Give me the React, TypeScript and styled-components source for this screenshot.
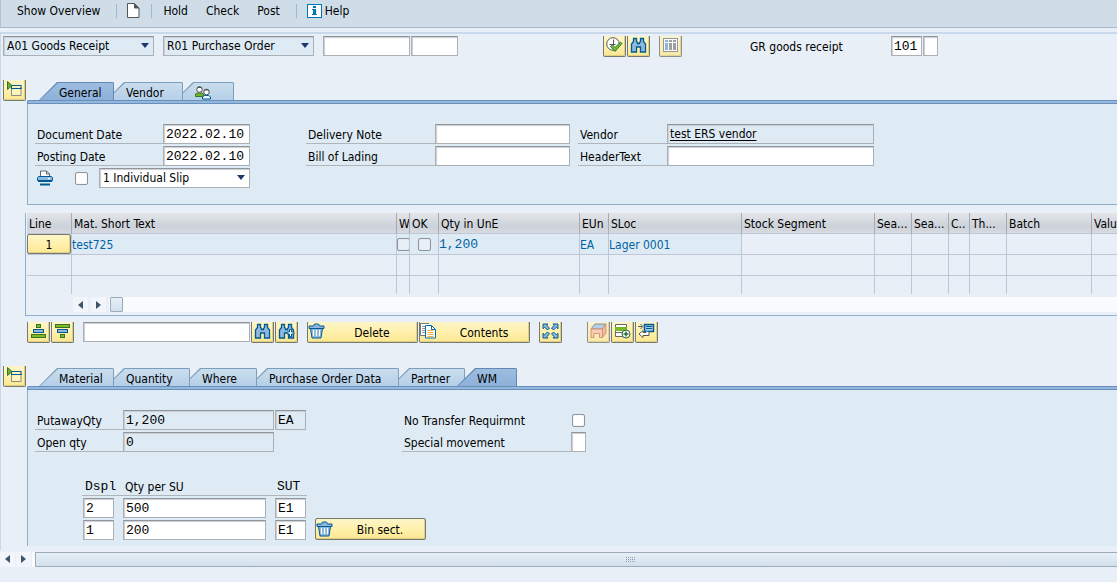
import React from "react";
import styled, { createGlobalStyle, css } from "styled-components";

const sans = `"DejaVu Sans Condensed", "DejaVu Sans", "Noto Sans", sans-serif`;
const mono = `"Liberation Mono", monospace`;

const GlobalStyle = createGlobalStyle`
  *, *::before, *::after { box-sizing: border-box; }
  body { margin: 0; background: #e8eff6; overflow-x: hidden; }
  body, button, input, select { font-family: ${sans}; font-size: 12px; color: #000; }
  svg { display: block; flex: none; }
`;

/* ---------- page frame ---------- */

const Toolbar = styled.header`
  display: flex;
  align-items: center;
  height: 28px;
  padding: 0 0 6px 7px;
  background: #cfdde8;
  border-bottom: 1px solid #a7b8c9;
  border-left: 1px solid #b5c4d3;
`;

const ToolButton = styled.button<{ $icon?: boolean }>`
  display: flex;
  align-items: center;
  gap: 3px;
  height: 20px;
  padding: ${(p) => (p.$icon ? "0 4px 0 8px" : "0 9px")};
  border: 0;
  background: none;
  white-space: nowrap;
`;

const ToolDivider = styled.span`
  width: 1px;
  height: 14px;
  margin: 0 2px 0 7px;
  background: #9fb8d3;
`;

const Work = styled.main`
  margin-top: 4px;
  padding: 2px 0 4px 2px;
  border-top: 2px solid #c9d8ea;
  border-left: 1px solid #c9d8ea;
`;

const BarRow = styled.div<{ $indent?: boolean }>`
  display: flex;
  align-items: flex-start;
  gap: 9px;
  height: 21px;
  padding-left: ${(p) => (p.$indent ? "24px" : "0")};
`;

const Group = styled.div<{ $before?: number }>`
  display: flex;
  align-items: flex-start;
  gap: 1px;
  margin-left: ${(p) => p.$before ?? 0}px;
`;

const BarLabel = styled.label`
  width: 132px;
  padding-top: 1px;
  line-height: 21px;
`;

/* ---------- controls ---------- */

const sunken = css`
  border: 1px solid #aab0b6;
  border-top: 1px solid #8f959b;
  box-shadow: inset 1px 1px 1px #c9ced3;
`;

const Field = styled.input<{ $w: number; $sans?: boolean }>`
  ${sunken}
  display: block;
  width: ${(p) => p.$w}px;
  height: 20px;
  padding: 0 2px;
  border-radius: 0;
  outline: none;
  background: ${(p) => (p.readOnly ? "#deebf5" : "#fff")};
  font-family: ${(p) => (p.$sans ? sans : mono)};
  font-size: ${(p) => (p.$sans ? "12px" : "13px")};
  text-decoration: ${(p) => (p.$sans ? "underline" : "none")};
  text-underline-offset: 2px;
`;

const SelectBox = styled.span<{ $flat?: boolean }>`
  position: relative;
  display: block;
  width: 151px;
  height: 20px;

  select {
    ${sunken}
    appearance: none;
    display: block;
    width: 100%;
    height: 100%;
    padding: 0 18px 0 3px;
    border-radius: 0;
    outline: none;
    background: ${(p) => (p.$flat ? "#deebf5" : "#fff")};
  }

  &::after {
    content: "";
    position: absolute;
    top: 7px;
    right: 5px;
    border: 4px solid transparent;
    border-top: 5px solid #1d3a66;
    border-bottom: 0;
    pointer-events: none;
  }
`;

const Check = styled.input.attrs({ type: "checkbox" })<{ $tint?: boolean }>`
  appearance: none;
  flex: none;
  width: 13px;
  height: 13px;
  margin: 0;
  border: 1px solid #8e959c;
  border-radius: 2px;
  background: ${(p) => (p.$tint ? "#e8eff6" : "#fff")};
  box-shadow: inset 0 0 1px #b9bfc6;
`;

const yellow = css`
  border: 1px solid #77786f;
  border-radius: 2px;
  background: linear-gradient(#fdf5c9, #fff0a9 55%, #fbe792);
  box-shadow: inset -1px -1px 0 #e0cf83;
`;

const IconButton = styled.button<{ $dim?: boolean }>`
  ${yellow}
  display: flex;
  align-items: center;
  justify-content: center;
  width: 23px;
  height: 21px;
  padding: 0 0 2px;
  border-top: 0;
  border-radius: 0 0 2px 2px;
  opacity: ${(p) => (p.$dim ? 0.8 : 1)};
`;

const TextButton = styled.button`
  ${yellow}
  display: flex;
  align-items: center;
  width: 111px;
  height: 22px;
  padding: 0;

  span {
    flex: 1;
    padding: 2px 0 0 2px;
  }
`;

const BarTextButton = styled(TextButton)`
  height: 21px;
  padding-bottom: 2px;
  border-top: 0;
  border-radius: 0 0 2px 2px;

  span { padding-top: 3px; }
`;

/* ---------- tabbed sections ---------- */

const Section = styled.section<{ $gap: number }>`
  display: flex;
  gap: 1px;
  margin-top: ${(p) => p.$gap}px;
`;

const SectionBody = styled.div`
  flex: 1;
  min-width: 0;
`;

const TabList = styled.div`
  display: flex;
  padding: 2px 0 0 12px;
  isolation: isolate;
`;

const Tab = styled.button<{ $w: number; $order: number; $active?: boolean }>`
  position: relative;
  z-index: ${(p) => (p.$active ? 20 : p.$order)};
  width: ${(p) => p.$w}px;
  height: 18px;
  margin-right: -8px;
  padding: 3px 0 0 20px;
  border: 0;
  background: ${(p) => (p.$active ? "#6288b3" : "#7d9dbd")};
  clip-path: polygon(0 100%, 18px 0, calc(100% - 1px) 0, 100% 1px, 100% 100%);
  text-align: left;
  white-space: nowrap;

  &::before {
    content: "";
    position: absolute;
    z-index: -1;
    inset: 1px 1px 0 1px;
    background: ${(p) =>
      p.$active ? "linear-gradient(#9dbde0, #8db1da)" : "linear-gradient(#c9dded, #b5cfe8)"};
    clip-path: polygon(0 100%, 18px 0, 100% 0, 100% 100%);
  }
`;

const TabStrip = styled.div`
  height: 4px;
  border: 1px solid #6890bb;
  border-right: 0;
  border-radius: 2px 0 0 0;
  background: #94b7dd;
`;

const Panel = styled.div<{ $open?: boolean }>`
  padding: 20px 0 ${(p) => (p.$open ? 6 : 16)}px 7px;
  border-left: 1px solid #8fafcf;
  border-bottom: ${(p) => (p.$open ? "0" : "1px solid #8fafcf")};
  background: #deebf5;
`;

const FormColumns = styled.div<{ $gaps: string }>`
  display: grid;
  grid-template-columns: ${(p) => p.$gaps};
  align-items: start;
`;

const FormColumn = styled.div`
  display: flex;
  flex-direction: column;
  gap: 2px;
`;

const FormRow = styled.div`
  display: flex;
  height: 20px;
`;

const FormLabel = styled.label<{ $w: number; $plain?: boolean }>`
  width: ${(p) => p.$w}px;
  padding: 1px 0 0 2px;
  border-bottom: 1px solid ${(p) => (p.$plain ? "transparent" : "#b0b5bb")};
  line-height: 21px;
  white-space: nowrap;
`;

const SlipRow = styled(FormRow)`
  align-items: center;
  padding-left: 2px;

  svg { margin-right: 22px; }
  input { margin-right: 11px; }
`;

const Spacer = styled.span`
  width: 1px;
`;

const CheckRow = styled(FormRow)`
  input { margin: 4px 0 0 1px; }
`;

const UnitTable = styled.table`
  border-collapse: separate;
  border-spacing: 0;

  th {
    height: 18px;
    padding: 0 0 0 3px;
    border-bottom: 1px solid #b0b5bb;
    font-weight: normal;
    text-align: left;
    line-height: 16px;
  }
  td { padding: 2px 0 0 1px; }
`;

const MonoText = styled.span`
  font-family: ${mono};
  font-size: 13px;
`;

const UnitArea = styled.div`
  display: flex;
  align-items: flex-end;
  gap: 8px;
  margin: 26px 0 0 47px;
`;

/* ---------- item table ---------- */

const ItemFrame = styled.div`
  margin: 8px 0 6px 22px;
  padding-left: 1px;
  border-left: 1px solid #8fafcf;
  border-bottom: 1px solid #8fb1d3;
`;

const ItemTable = styled.table`
  width: 100%;
  table-layout: fixed;
  border-collapse: separate;
  border-spacing: 0;

  th, td {
    height: 21px;
    padding: 0;
    border-right: 1px solid #bfc6d6;
    border-bottom: 1px solid #bfc6d6;
    overflow: hidden;
    white-space: nowrap;
    text-align: left;
    font-weight: normal;
  }
  th {
    padding: 2px 0 0 2px;
    border-right-color: #a3abb8;
    background: linear-gradient(#e4e6e9, #d3d8de 45%, #cdd2da 70%, #d8dbe0);
  }
  td { color: #0062a4; }
  tr:last-child td { height: 18px; border-bottom: 0; }
  th:last-child, td:last-child { border-right: 0; }
`;

const Cell = styled.td<{ $filled?: boolean }>`
  background: ${(p) => (p.$filled ? "#deebf5" : "transparent")};
  input { display: block; }
`;

const OkCell = styled(Cell)`
  input { margin: 0 0 0 8px; }
`;

const CellText = styled.div`
  padding-top: 2px;
`;

const LineButton = styled.button`
  ${yellow}
  display: block;
  width: 44px;
  height: 20px;
  padding: 1px 0 0;
`;

const QtyText = styled(MonoText)`
  color: #0062a4;
`;

/* ---------- scroll bars ---------- */

const ScrollBar = styled.div<{ $page?: boolean }>`
  display: flex;
  align-items: center;
  gap: 3px;
  height: ${(p) => (p.$page ? 18 : 21)}px;
  padding-left: ${(p) => (p.$page ? 0 : 46)}px;
`;

const ScrollArrow = styled.button`
  display: flex;
  align-items: center;
  justify-content: center;
  width: 15px;
  height: 15px;
  padding: 0;
  border: 0;
  background: #f2f6fa;
`;

const ScrollTrack = styled.div`
  flex: 1;
  height: 15px;
  padding-left: 1px;
  background: #fafbfc;
`;

const ScrollThumb = styled.div<{ $full?: boolean }>`
  display: flex;
  align-items: center;
  justify-content: center;
  width: ${(p) => (p.$full ? "auto" : "13px")};
  height: 15px;
  padding-left: ${(p) => (p.$full ? "10%" : "0")};
  border: 1px solid #9aabbb;
  border-right-width: ${(p) => (p.$full ? 0 : 1)}px;
  border-radius: ${(p) => (p.$full ? "1px 0 0 1px" : "1px")};
  background: linear-gradient(#e6eff6, #d3e0ec);
`;

const PageScroll = styled(ScrollBar)`
  gap: 1px;

  ${ScrollTrack} { padding-left: 3px; }
`;

/* ---------- icons ---------- */

const DocIcon = () => (
  <svg width="13" height="15" viewBox="0 0 13 15">
    <path d="M.5.5h7l4.500 4.500v9.500h-11.500z" fill="#fff" stroke="#555" />
    <path d="M7.500.5v4.500h4.500z" fill="#555" stroke="#555" />
  </svg>
);

const InfoIcon = () => (
  <svg width="15" height="14" viewBox="0 0 15 14" shapeRendering="crispEdges">
    <path d="M.5.5h14v13h-14z" fill="#fff" stroke="#0078b8" />
    <path d="M6 2h3v2h-3zM5 5h4v5h1v1h-5v-1h1v-4h-1z" fill="#0078b8" />
  </svg>
);

const OverviewIcon = () => (
  <svg width="15" height="16" viewBox="0 0 15 16">
    <path d="M4.500 6v8.500h9.500v-8.500" fill="#fdf3bd" stroke="#888c88" />
    <path d="M5 4.500h9.500M4 7.500h10.500" stroke="#005b94" />
    <path d="M4.500 5v3M14 5v3" stroke="#005b94" />
    <path d="M.5.500l4.500 4-4.500 4z" fill="#6db02a" stroke="#34752a" />
  </svg>
);

const ClockCheckIcon = () => (
  <svg width="17" height="16" viewBox="0 0 17 16">
    <circle cx="7" cy="7" r="6.300" fill="#fff" stroke="#555" />
    <path d="M7.500 2.500v6M3.500 7.500h6" stroke="#555" fill="none" />
    <path d="M4.500 9.500l2-1.500 2.500 2.500 5.500-5.500 1.500 1.500-7 8z" fill="#7bbb2e" stroke="#2d7c34" />
  </svg>
);

const Binoculars = ({ plus }: { plus?: boolean }) => (
  <svg width="17" height="16" viewBox="0 0 17 16">
    <path
      d="M3.500 1.500h3v3l1 1v1h2v-1l1-1v-3h3v3l2 2.500v8h-5v-5h-4v5h-5v-8l2-2.500z"
      fill="#90b9dd"
      stroke="#005b94"
      strokeWidth="1.300"
    />
    {plus && (
      <path d="M11.500 6.500h2v2.500h2.500v2h-2.500v2.500h-2v-2.500h-2.500v-2h2.500z" fill="#fff" stroke="#005b94" />
    )}
  </svg>
);

const ColumnsIcon = () => (
  <svg width="17" height="16" viewBox="0 0 17 16" shapeRendering="crispEdges">
    <path d="M1.500 1.500h14v13h-14z" fill="#fff" stroke="#808080" />
    <path d="M3 3h3v2h-3zM3 6h3v7h-3z" fill="#78a8c8" />
    <path d="M7 3h3v2h-3zM7 6h3v7h-3zM11 3h3v2h-3zM11 6h3v7h-3z" fill="#8b8b8b" />
  </svg>
);

const PeopleIcon = () => (
  <svg width="17" height="14" viewBox="0 0 17 14">
    <path d="M.5 10.500v-2.500l2-1h4l2 1v2.500z" fill="#73b32c" stroke="#34752a" />
    <circle cx="4.500" cy="3.500" r="2.800" fill="#fff" stroke="#555" />
    <path d="M2 3.500q0-3 2.500-3t2.500 3l-1-1.500h-3z" fill="#555" />
    <path d="M7.500 13v-2l2-1.500h4l2 1.500v2z" fill="#eaf5ff" stroke="#005b94" />
    <circle cx="11.500" cy="6" r="2.800" fill="#fff" stroke="#555" />
    <path d="M9 6q0-3 2.500-3t2.500 3l-1-1.500h-3z" fill="#555" />
  </svg>
);

const PrinterIcon = () => (
  <svg width="16" height="16" viewBox="0 0 16 16">
    <path d="M3.500 7v-6h6l3 3v3" fill="#fff" stroke="#666" />
    <path d="M9.500 1v3h3" fill="none" stroke="#666" />
    <path d="M.5 7.500l1-1h13l1 1v3h-15z" fill="#8fb9dc" stroke="#005b94" />
    <path d="M11 8.500h2" stroke="#fff" />
    <path d="M1 11h14v1h-14zM3 13.500h10v2h-10z" fill="#005b94" />
  </svg>
);

const PyramidIcon = ({ down }: { down?: boolean }) => (
  <svg width="17" height="16" viewBox="0 0 17 16" shapeRendering="crispEdges">
    {down ? (
      <>
        <path d="M1.500 1.500h14v3h-14z" fill="#84b920" stroke="#34752a" />
        <path d="M3.500 6.500h10v3h-10z" fill="#8fb9dc" stroke="#005b94" />
        <path d="M6.500 11.500h4v3h-4z" fill="#84b920" stroke="#34752a" />
      </>
    ) : (
      <>
        <path d="M6.500 1.500h4v3h-4z" fill="#84b920" stroke="#34752a" />
        <path d="M3.500 6.500h10v3h-10z" fill="#8fb9dc" stroke="#005b94" />
        <path d="M1.500 11.500h14v3h-14z" fill="#84b920" stroke="#34752a" />
      </>
    )}
  </svg>
);

const TrashIcon = () => (
  <svg width="17" height="16" viewBox="0 0 17 16">
    <path d="M2.500 5.500l1.500 9.500h9l1.500-9.500z" fill="#8fb9dc" stroke="#005b94" />
    <path d="M5.500 7v6M8.500 7v6M11.500 7v6" stroke="#fff" />
    <path d="M1 5.500v-2.500h4.500l1-2h4l1 2h4.500v2.500z" fill="#8fb9dc" stroke="#005b94" />
  </svg>
);

const ContentsIcon = () => (
  <svg width="17" height="16" viewBox="0 0 17 16">
    <path d="M9 .5h-8.500v12h5" fill="#fff" stroke="#777" />
    <path d="M2 3.500h3M2 5.500h3M2 7.500h3M2 9.500h3" stroke="#999" />
    <path d="M5.500 2.500h6l4 4v8.500h-10z" fill="#fff" stroke="#0071ad" />
    <path d="M11.500 2.500v4h4" fill="none" stroke="#0071ad" />
    <path d="M7.500 7.500h5.500M7.500 9.500h6M7.500 11.500h6M7.500 13.500h6" stroke="#efaf35" />
  </svg>
);

const FullScreenIcon = () => (
  <svg width="17" height="16" viewBox="0 0 17 16">
    <g fill="#90b9dd" stroke="#005b94">
      <path d="M1 1h5l-1.300 1.500 2.800 2.500-2 2-2.800-2.800-1.700 1.500z" />
      <path d="M16 1h-5l1.300 1.500-2.800 2.500 2 2 2.800-2.800 1.700 1.500z" />
      <path d="M1 15h5l-1.300-1.500 2.800-2.500-2-2-2.800 2.800-1.700-1.500z" />
      <path d="M16 15h-5l1.300-1.500-2.800-2.500 2-2 2.800 2.800 1.700-1.500z" />
    </g>
  </svg>
);

const WarehouseIcon = () => (
  <svg width="17" height="16" viewBox="0 0 17 16">
    <path d="M1 6l4-5h11l-3.500 5z" fill="#a9c8e2" stroke="#777" />
    <path d="M12.500 6l3.500-5v9l-3.500 4.500z" fill="#f3af8c" stroke="#d97a5c" />
    <path d="M1 6h11.500v8.500h-3v-4h-5.500v4h-3z" fill="#f9c7a4" stroke="#d97a5c" />
  </svg>
);

const AddRowIcon = () => (
  <svg width="17" height="16" viewBox="0 0 17 16">
    <path d="M1.500 1.500h11v12h-11z" fill="#fff" stroke="#666" />
    <path d="M1 4h12v4h-12z" fill="#76b82a" />
    <path d="M1 9.500h12" stroke="#666" />
    <circle cx="12" cy="11" r="4" fill="#fff" stroke="#2a6a3e" />
    <path d="M12 8.500v5M9.500 11h5" stroke="#2a6a3e" strokeWidth="1.500" />
  </svg>
);

const TransferIcon = () => (
  <svg width="17" height="16" viewBox="0 0 17 16">
    <path d="M6.500 1.500h9v7h-9z" fill="#a9cbe8" stroke="#005b94" strokeWidth="1.500" />
    <path d="M8 3.500h6M8 5.500h6" stroke="#005b94" />
    <path d="M0 3.500h4M2.500 1l2.500 2.500-2.500 2.500" fill="none" stroke="#555" />
    <path d="M11 9v3.500h-6v2l-4-3.500 4-3.500v2h3v-1" fill="#fff" stroke="#555" />
  </svg>
);

const ArrowIcon = ({ right }: { right?: boolean }) => (
  <svg width="7" height="8" viewBox="0 0 7 8">
    <path d={right ? "M1 0l5 4-5 4z" : "M6 0l-5 4 5 4z"} fill="#3c5468" />
  </svg>
);

const GripIcon = () => (
  <svg width="9" height="5" viewBox="0 0 9 5" shapeRendering="crispEdges">
    <path d="M0 0h1v1h-1zM2 0h1v1h-1zM4 0h1v1h-1zM6 0h1v1h-1zM8 0h1v1h-1zM0 2h1v1h-1zM2 2h1v1h-1zM4 2h1v1h-1zM6 2h1v1h-1zM8 2h1v1h-1zM0 4h1v1h-1zM2 4h1v1h-1zM4 4h1v1h-1zM6 4h1v1h-1zM8 4h1v1h-1z" fill="#8b9cac" />
  </svg>
);

/* ---------- data ---------- */

const columns: [string, number | undefined][] = [
  ["Line", 45],
  ["Mat. Short Text", 325],
  ["W", 13],
  ["OK", 29],
  ["Qty in UnE", 141],
  ["EUn", 29],
  ["SLoc", 133],
  ["Stock Segment", 133],
  ["Sea...", 37],
  ["Sea...", 37],
  ["C..", 21],
  ["Th...", 37],
  ["Batch", 85],
  ["Valu", undefined],
];

const itemTabs: [string, number][] = [
  ["Material", 75],
  ["Quantity", 84],
  ["Where", 75],
  ["Purchase Order Data", 150],
  ["Partner", 74],
  ["WM", 60],
];

const units = [
  ["2", "500", "E1"],
  ["1", "200", "E1"],
];

export default function App() {
  return (
    <>
      <GlobalStyle />
      <Toolbar>
        <ToolButton>Show Overview</ToolButton>
        <ToolDivider />
        <ToolButton $icon aria-label="New document">
          <DocIcon />
        </ToolButton>
        <ToolDivider />
        <ToolButton>Hold</ToolButton>
        <ToolButton>Check</ToolButton>
        <ToolButton>Post</ToolButton>
        <ToolDivider />
        <ToolButton $icon>
          <InfoIcon />
          Help
        </ToolButton>
      </Toolbar>

      <Work>
        <BarRow>
          <SelectBox $flat>
            <select aria-label="Action">
              <option>A01 Goods Receipt</option>
            </select>
          </SelectBox>
          <SelectBox $flat>
            <select aria-label="Reference document">
              <option>R01 Purchase Order</option>
            </select>
          </SelectBox>
          <Group>
            <Field $w={87} aria-label="Purchase order number" />
            <Field $w={47} aria-label="Purchase order item" />
          </Group>
          <Group $before={136}>
            <IconButton aria-label="Execute"><ClockCheckIcon /></IconButton>
            <IconButton aria-label="Find"><Binoculars /></IconButton>
          </Group>
          <IconButton $dim aria-label="Layout"><ColumnsIcon /></IconButton>
          <Group $before={59}>
            <BarLabel htmlFor="movement">GR goods receipt</BarLabel>
          </Group>
          <Group>
            <Field id="movement" $w={31} defaultValue="101" />
            <Field $w={15} aria-label="Special stock" />
          </Group>
        </BarRow>

        <Section $gap={23}>
          <IconButton aria-label="Collapse header"><OverviewIcon /></IconButton>
          <SectionBody>
            <TabList role="tablist">
              <Tab role="tab" $w={75} $order={9} $active>General</Tab>
              <Tab role="tab" $w={77} $order={8}>Vendor</Tab>
              <Tab role="tab" $w={59} $order={7} aria-label="Partners"><PeopleIcon /></Tab>
            </TabList>
            <TabStrip />
            <Panel>
              <FormColumns $gaps="271px 272px 1fr">
                <FormColumn>
                  <FormRow>
                    <FormLabel $w={128} htmlFor="docDate">Document Date</FormLabel>
                    <Field id="docDate" $w={87} defaultValue="2022.02.10" />
                  </FormRow>
                  <FormRow>
                    <FormLabel $w={128} htmlFor="postDate">Posting Date</FormLabel>
                    <Field id="postDate" $w={87} defaultValue="2022.02.10" />
                  </FormRow>
                  <SlipRow>
                    <PrinterIcon />
                    <Check aria-label="Print slip" />
                    <SelectBox>
                      <select aria-label="Slip type">
                        <option>1 Individual Slip</option>
                      </select>
                    </SelectBox>
                  </SlipRow>
                </FormColumn>
                <FormColumn>
                  <FormRow>
                    <FormLabel $w={129} htmlFor="delivery">Delivery Note</FormLabel>
                    <Field id="delivery" $w={135} />
                  </FormRow>
                  <FormRow>
                    <FormLabel $w={129} htmlFor="lading">Bill of Lading</FormLabel>
                    <Field id="lading" $w={135} />
                  </FormRow>
                </FormColumn>
                <FormColumn>
                  <FormRow>
                    <FormLabel $w={89} htmlFor="vendor">Vendor</FormLabel>
                    <Field id="vendor" $w={207} $sans readOnly value="test ERS vendor" />
                  </FormRow>
                  <FormRow>
                    <FormLabel $w={89} htmlFor="headerText">HeaderText</FormLabel>
                    <Field id="headerText" $w={207} />
                  </FormRow>
                </FormColumn>
              </FormColumns>
            </Panel>
          </SectionBody>
        </Section>

        <ItemFrame>
          <ItemTable>
            <colgroup>
              {columns.map(([, w], i) => (
                <col key={i} width={w} />
              ))}
            </colgroup>
            <thead>
              <tr>
                {columns.map(([name], i) => (
                  <th key={i} scope="col">{name}</th>
                ))}
              </tr>
            </thead>
            <tbody>
              <tr>
                <Cell><LineButton>1</LineButton></Cell>
                <Cell $filled><CellText>test725</CellText></Cell>
                <Cell $filled><Check $tint aria-label="W" /></Cell>
                <OkCell $filled><Check $tint aria-label="OK" /></OkCell>
                <Cell $filled><QtyText>1,200</QtyText></Cell>
                <Cell $filled><CellText>EA</CellText></Cell>
                <Cell $filled><CellText>Lager 0001</CellText></Cell>
                {columns.slice(7).map((_, i) => <Cell key={i} />)}
              </tr>
              <tr>{columns.map((_, i) => <Cell key={i} />)}</tr>
              <tr>{columns.map((_, i) => <Cell key={i} />)}</tr>
            </tbody>
          </ItemTable>
          <ScrollBar>
            <ScrollArrow aria-label="Scroll left"><ArrowIcon /></ScrollArrow>
            <ScrollArrow aria-label="Scroll right"><ArrowIcon right /></ScrollArrow>
            <ScrollTrack><ScrollThumb /></ScrollTrack>
          </ScrollBar>
        </ItemFrame>

        <BarRow $indent>
          <Group>
            <IconButton aria-label="Sort ascending"><PyramidIcon /></IconButton>
            <IconButton aria-label="Sort descending"><PyramidIcon down /></IconButton>
          </Group>
          <Group>
            <Field $w={167} aria-label="Search items" />
            <IconButton aria-label="Find item"><Binoculars /></IconButton>
            <IconButton aria-label="Find next"><Binoculars plus /></IconButton>
          </Group>
          <Group>
            <BarTextButton><TrashIcon /><span>Delete</span></BarTextButton>
            <BarTextButton><ContentsIcon /><span>Contents</span></BarTextButton>
          </Group>
          <IconButton aria-label="Full screen"><FullScreenIcon /></IconButton>
          <Group $before={16}>
            <IconButton $dim aria-label="Warehouse"><WarehouseIcon /></IconButton>
            <IconButton aria-label="Add line"><AddRowIcon /></IconButton>
            <IconButton aria-label="Transfer"><TransferIcon /></IconButton>
          </Group>
        </BarRow>

        <Section $gap={23}>
          <IconButton aria-label="Collapse detail"><OverviewIcon /></IconButton>
          <SectionBody>
            <TabList role="tablist">
              {itemTabs.map(([name, w], i) => (
                <Tab key={name} role="tab" $w={w} $order={9 - i} $active={name === "WM"}>
                  {name}
                </Tab>
              ))}
            </TabList>
            <TabStrip />
            <Panel $open>
              <FormColumns $gaps="367px 1fr">
                <FormColumn>
                  <FormRow>
                    <FormLabel $w={88} htmlFor="putaway">PutawayQty</FormLabel>
                    <Field id="putaway" $w={151} readOnly value="1,200" />
                    <Spacer />
                    <Field $w={31} readOnly value="EA" aria-label="Unit" />
                  </FormRow>
                  <FormRow>
                    <FormLabel $w={88} htmlFor="open">Open qty</FormLabel>
                    <Field id="open" $w={151} readOnly value="0" />
                  </FormRow>
                </FormColumn>
                <FormColumn>
                  <CheckRow>
                    <FormLabel $w={169} $plain htmlFor="noTransfer">No Transfer Requirmnt</FormLabel>
                    <Check id="noTransfer" />
                  </CheckRow>
                  <FormRow>
                    <FormLabel $w={169} htmlFor="special">Special movement</FormLabel>
                    <Field id="special" $w={15} />
                  </FormRow>
                </FormColumn>
              </FormColumns>
              <UnitArea>
                <UnitTable>
                  <colgroup>
                    <col width={40} />
                    <col width={152} />
                    <col width={33} />
                  </colgroup>
                  <thead>
                    <tr>
                      <th scope="col"><MonoText>Dspl</MonoText></th>
                      <th scope="col">Qty per SU</th>
                      <th scope="col"><MonoText>SUT</MonoText></th>
                    </tr>
                  </thead>
                  <tbody>
                    {units.map(([dspl, qty, sut]) => (
                      <tr key={dspl}>
                        <td><Field $w={31} defaultValue={dspl} aria-label="Dspl" /></td>
                        <td><Field $w={143} defaultValue={qty} aria-label="Qty per SU" /></td>
                        <td><Field $w={31} defaultValue={sut} aria-label="SUT" /></td>
                      </tr>
                    ))}
                  </tbody>
                </UnitTable>
                <TextButton><TrashIcon /><span>Bin sect.</span></TextButton>
              </UnitArea>
            </Panel>
          </SectionBody>
        </Section>
      </Work>

      <PageScroll $page>
        <ScrollArrow aria-label="Scroll page left"><ArrowIcon /></ScrollArrow>
        <ScrollArrow aria-label="Scroll page right"><ArrowIcon right /></ScrollArrow>
        <ScrollTrack>
          <ScrollThumb $full><GripIcon /></ScrollThumb>
        </ScrollTrack>
      </PageScroll>
    </>
  );
}
